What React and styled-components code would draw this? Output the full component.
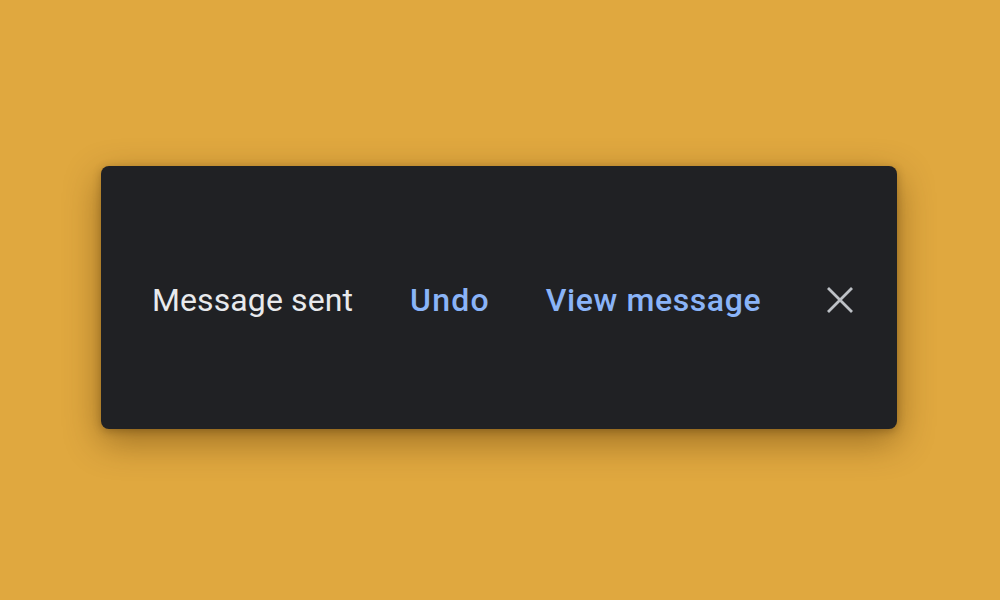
import React from "react";
import styled, { createGlobalStyle } from "styled-components";

const GlobalStyle = createGlobalStyle`
  html, body {
    margin: 0;
    padding: 0;
    background: #e0a83f;
    font-family: Roboto, "Noto Sans", sans-serif;
  }
`;

const Page = styled.div`
  width: 1000px;
  height: 600px;
  padding: 166px 0 0 101px;
  box-sizing: border-box;
`;

const Snackbar = styled.div`
  width: 796px;
  height: 263px;
  box-sizing: border-box;
  background: #202124;
  border-radius: 8px;
  box-shadow: 0 12px 36px rgba(70, 40, 0, 0.45), 0 2px 8px rgba(60, 35, 0, 0.3);
  display: flex;
  align-items: center;
  padding: 4px 0 0 51px;
`;

const Label = styled.span`
  color: #e8eaed;
  font-size: 32px;
  font-weight: 400;
  letter-spacing: 0.1px;
`;

const Action = styled.button`
  background: none;
  border: none;
  padding: 0;
  margin-left: ${p => p.$gap}px;
  color: #8ab4f8;
  font-family: inherit;
  font-size: 32px;
  font-weight: 500;
  letter-spacing: ${p => p.$spacing}px;
  cursor: pointer;
`;

const Close = styled.button`
  background: none;
  border: none;
  padding: 0;
  margin-left: ${p => p.$gap}px;
  width: 28px;
  height: 28px;
  display: flex;
  cursor: pointer;
`;

export default function App() {
  return (
    <>
      <GlobalStyle />
      <Page>
        <Snackbar>
          <Label>Message sent</Label>
          <Action $gap={57} $spacing={1.2}>Undo</Action>
          <Action $gap={56} $spacing={0.6}>View message</Action>
          <Close $gap={65} aria-label="Close">
            <svg width="28" height="28" viewBox="0 0 28 28">
              <path d="M2 2 L26 26 M26 2 L2 26" stroke="#bdc1c6" strokeWidth="2.8" />
            </svg>
          </Close>
        </Snackbar>
      </Page>
    </>
  );
}
